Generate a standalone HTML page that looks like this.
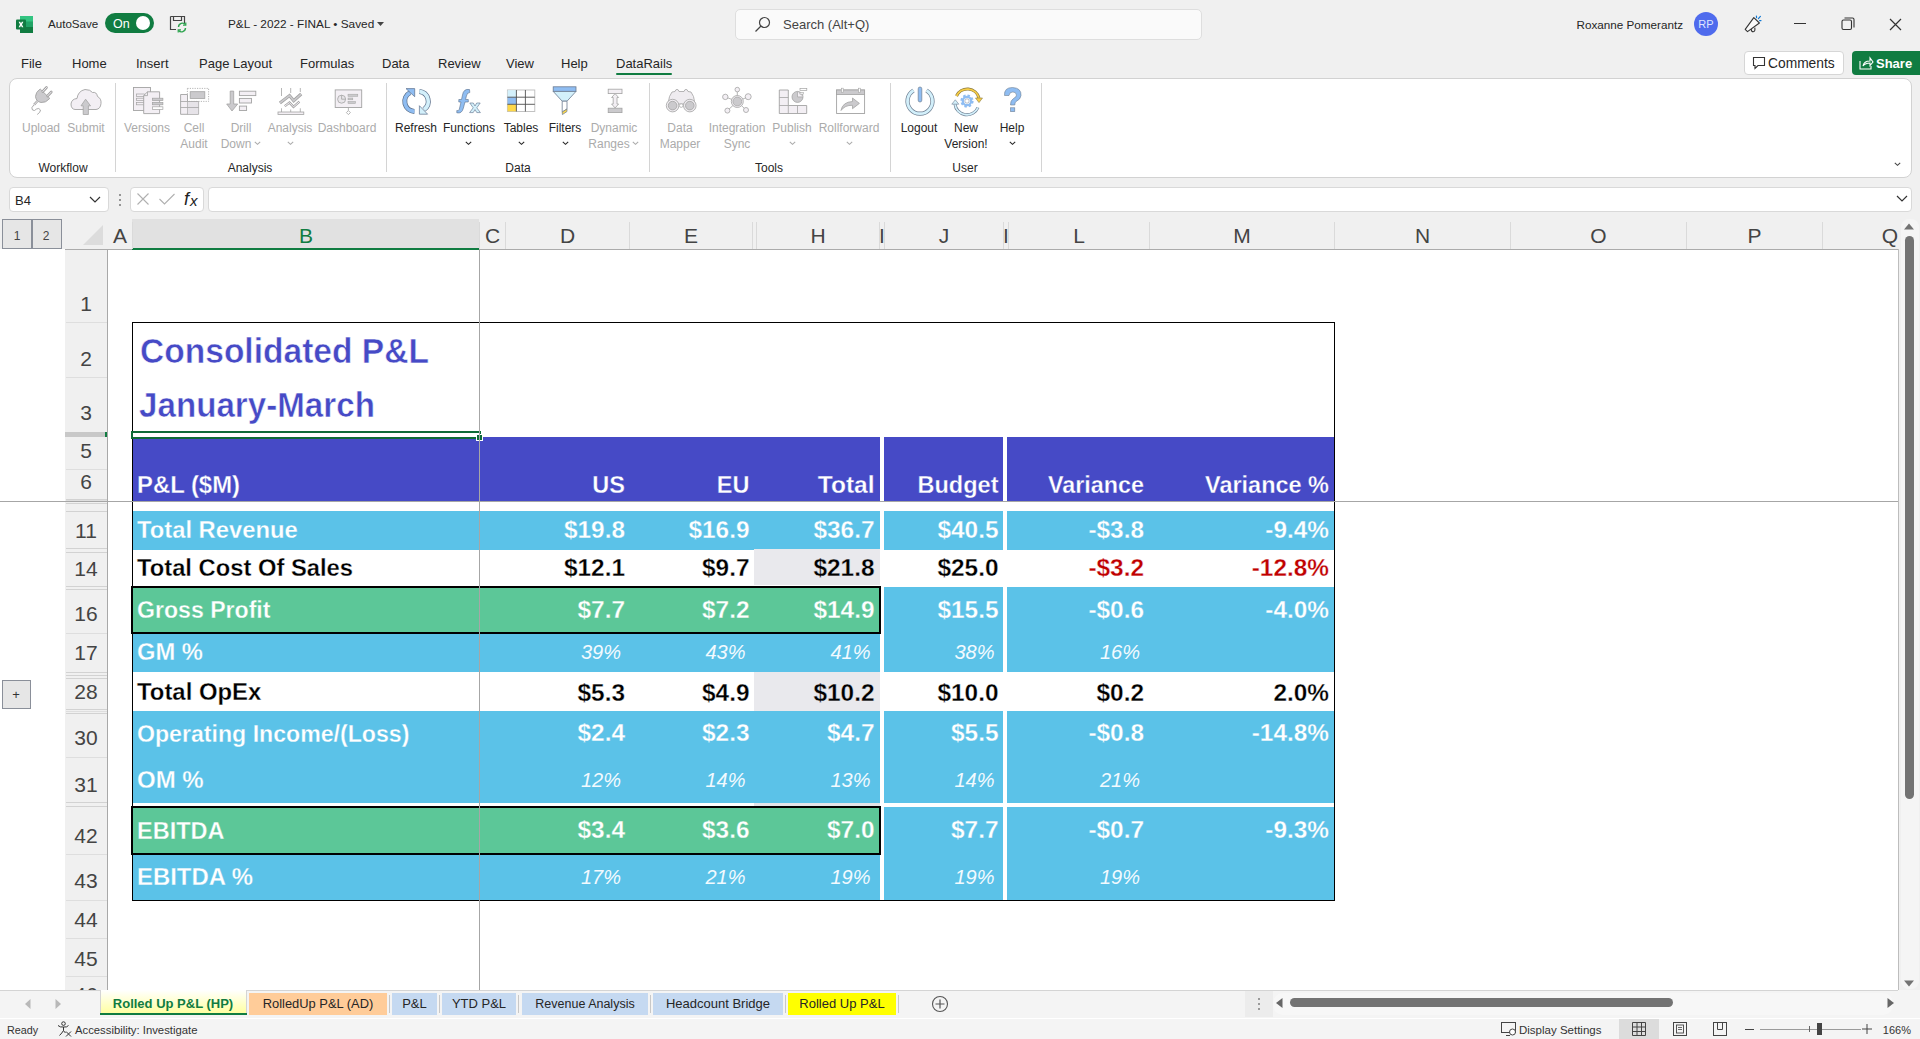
<!DOCTYPE html>
<html><head><meta charset="utf-8"><title>P&amp;L - 2022 - FINAL</title>
<style>
html,body{margin:0;padding:0;}
body{width:1920px;height:1039px;overflow:hidden;position:relative;background:#f0f0f0;font-family:"Liberation Sans", sans-serif;}
.t{position:absolute;white-space:nowrap;line-height:1;}
.r{position:absolute;box-sizing:border-box;}
svg.r{overflow:visible;}
</style></head><body>
<svg class="r" style="left:16px;top:16px;" width="17" height="17" viewBox="0 0 17 17"><rect x="4" y="0" width="13" height="17" rx="1" fill="#185c37"/><rect x="4" y="0" width="13" height="6" fill="#33c481"/><rect x="4" y="5.5" width="13" height="6" fill="#21a366"/><rect x="4" y="11" width="13" height="6" fill="#107c41"/><rect x="0" y="3.5" width="10" height="10" rx="1" fill="#107c41"/><path d="M2.6 5.8 L4.2 5.8 L5 7.6 L5.8 5.8 L7.4 5.8 L6 8.5 L7.4 11.2 L5.8 11.2 L5 9.4 L4.2 11.2 L2.6 11.2 L4 8.5Z" fill="#fff"/></svg><div class="t" style="top:18.00px;font-size:11.6px;color:#262626;font-weight:normal;font-style:normal;left:48px;">AutoSave</div><div class="r" style="left:105px;top:13px;width:49px;height:20px;background:#107c41;border-radius:10px;"></div><div class="t" style="top:18.00px;font-size:12.5px;color:#fff;font-weight:normal;font-style:normal;left:113px;">On</div><svg class="r" style="left:135px;top:15px;" width="16" height="16" viewBox="0 0 16 16"><circle cx="8" cy="8" r="7" fill="#fff"/></svg><svg class="r" style="left:169px;top:15px;" width="18" height="18" viewBox="0 0 18 18"><path d="M1.5 1.5 H15.5 V9 M1.5 1.5 V14.5 H7" fill="none" stroke="#444" stroke-width="1.2"/><path d="M4.5 1.5 V5.5 H12.5 V1.5" fill="none" stroke="#444" stroke-width="1.2"/><path d="M9.5 12 a4 4 0 0 1 7 -2.5 M16.5 13 a4 4 0 0 1 -7 2.5" fill="none" stroke="#2ea44f" stroke-width="1.4"/><path d="M16.8 7.5 V10.2 H14" fill="none" stroke="#2ea44f" stroke-width="1.2"/><path d="M9.2 17.5 V14.8 H12" fill="none" stroke="#2ea44f" stroke-width="1.2"/></svg><div class="t" style="top:19.00px;font-size:11.8px;color:#262626;font-weight:normal;font-style:normal;left:228px;">P&amp;L - 2022 - FINAL • Saved</div><svg class="r" style="left:377px;top:22px;" width="8" height="5" viewBox="0 0 8 5"><path d="M0 0 H7 L3.5 4Z" fill="#444"/></svg><div class="r" style="left:735px;top:9px;width:467px;height:31px;background:#fafafa;border:1px solid #dedede;border-radius:5px;"></div><svg class="r" style="left:754px;top:16px;" width="17" height="17" viewBox="0 0 17 17"><circle cx="10.5" cy="6.5" r="5" fill="none" stroke="#444" stroke-width="1.2"/><path d="M7 10 L1.5 15.5" stroke="#444" stroke-width="1.3"/></svg><div class="t" style="top:18.00px;font-size:13px;color:#444;font-weight:normal;font-style:normal;left:783px;">Search (Alt+Q)</div><div class="t" style="top:19.00px;font-size:11.7px;color:#262626;font-weight:normal;font-style:normal;left:483px;width:1200px;text-align:right;">Roxanne Pomerantz</div><svg class="r" style="left:1694px;top:12px;" width="24" height="24" viewBox="0 0 24 24"><circle cx="12" cy="12" r="12" fill="#4f6bed"/></svg><div class="t" style="top:19.00px;font-size:11px;color:#dfe6ff;font-weight:normal;font-style:normal;left:1106px;width:1200px;text-align:center;">RP</div><svg class="r" style="left:1740px;top:12px;" width="26" height="24" viewBox="0 0 26 24"><path d="M5.2 17.4 L7.5 19.6 L19.4 11 L13.8 5.7 Z" fill="#fafafa" stroke="#333" stroke-width="1.1" stroke-linejoin="round"/><path d="M11.3 17 Q11.2 19.8 13.3 19.8 Q15.4 19.6 14.8 15.6" fill="none" stroke="#333" stroke-width="1.1"/><path d="M16.4 4.2 L16.6 5.6 M18.4 6.6 L20.4 4.4 M19.6 8.6 L21 8.6" stroke="#0f78d4" stroke-width="1.2" stroke-linecap="round"/></svg><div class="r" style="left:1794px;top:23px;width:12px;height:1px;background:#333;"></div><svg class="r" style="left:1841px;top:17px;" width="14" height="14" viewBox="0 0 14 14"><rect x="1" y="3" width="9.5" height="9.5" rx="1.5" fill="none" stroke="#333" stroke-width="1.1"/><path d="M3.5 1 H11.5 a1.5 1.5 0 0 1 1.5 1.5 V10.5" fill="none" stroke="#333" stroke-width="1.1"/></svg><svg class="r" style="left:1889px;top:18px;" width="13" height="13" viewBox="0 0 13 13"><path d="M1 1 L12 12 M12 1 L1 12" stroke="#333" stroke-width="1.2"/></svg><div class="t" style="top:57.00px;font-size:13px;color:#262626;font-weight:normal;font-style:normal;left:21px;">File</div><div class="t" style="top:57.00px;font-size:13px;color:#262626;font-weight:normal;font-style:normal;left:72px;">Home</div><div class="t" style="top:57.00px;font-size:13px;color:#262626;font-weight:normal;font-style:normal;left:136px;">Insert</div><div class="t" style="top:57.00px;font-size:13px;color:#262626;font-weight:normal;font-style:normal;left:199px;">Page Layout</div><div class="t" style="top:57.00px;font-size:13px;color:#262626;font-weight:normal;font-style:normal;left:300px;">Formulas</div><div class="t" style="top:57.00px;font-size:13px;color:#262626;font-weight:normal;font-style:normal;left:382px;">Data</div><div class="t" style="top:57.00px;font-size:13px;color:#262626;font-weight:normal;font-style:normal;left:438px;">Review</div><div class="t" style="top:57.00px;font-size:13px;color:#262626;font-weight:normal;font-style:normal;left:506px;">View</div><div class="t" style="top:57.00px;font-size:13px;color:#262626;font-weight:normal;font-style:normal;left:561px;">Help</div><div class="t" style="top:57.00px;font-size:13px;color:#262626;font-weight:normal;font-style:normal;left:616px;">DataRails</div><div class="r" style="left:616px;top:73px;width:56px;height:2px;background:#107c41;border-radius:1px;"></div><div class="r" style="left:1744px;top:51px;width:100px;height:24px;background:#fff;border:1px solid #d6d6d6;border-radius:4px;"></div><svg class="r" style="left:1752px;top:56px;" width="14" height="14" viewBox="0 0 14 14"><path d="M1.5 1.5 H12.5 V9.5 H6 L3 12.5 V9.5 H1.5 Z" fill="none" stroke="#333" stroke-width="1.1"/></svg><div class="t" style="top:57.00px;font-size:13.8px;color:#262626;font-weight:normal;font-style:normal;left:1768px;">Comments</div><div class="r" style="left:1852px;top:51px;width:68px;height:24px;background:#107c41;border-radius:4px 0 0 4px;"></div><svg class="r" style="left:1859px;top:56px;" width="14" height="14" viewBox="0 0 14 14"><path d="M1 5 V13 H12 V10" fill="none" stroke="#fff" stroke-width="1.1"/><path d="M4 10 Q5 5 11 5 V2 L14 6 L11 9.5 V7 Q6.5 7 4 10Z" fill="none" stroke="#fff" stroke-width="1.1"/></svg><div class="t" style="top:57.00px;font-size:13px;color:#fff;font-weight:bold;font-style:normal;left:1876px;">Share</div><div class="r" style="left:9px;top:78px;width:1903px;height:100px;background:#fff;border:1px solid #d2d2d2;border-radius:8px;"></div><div class="r" style="left:115px;top:83px;width:1px;height:89px;background:#d4d4d4;"></div><div class="r" style="left:386px;top:83px;width:1px;height:89px;background:#d4d4d4;"></div><div class="r" style="left:649px;top:83px;width:1px;height:89px;background:#d4d4d4;"></div><div class="r" style="left:890px;top:83px;width:1px;height:89px;background:#d4d4d4;"></div><div class="r" style="left:1041px;top:83px;width:1px;height:89px;background:#d4d4d4;"></div><div class="t" style="top:162.00px;font-size:12px;color:#262626;font-weight:normal;font-style:normal;left:-537px;width:1200px;text-align:center;">Workflow</div><div class="t" style="top:162.00px;font-size:12px;color:#262626;font-weight:normal;font-style:normal;left:-350px;width:1200px;text-align:center;">Analysis</div><div class="t" style="top:162.00px;font-size:12px;color:#262626;font-weight:normal;font-style:normal;left:-82px;width:1200px;text-align:center;">Data</div><div class="t" style="top:162.00px;font-size:12px;color:#262626;font-weight:normal;font-style:normal;left:169px;width:1200px;text-align:center;">Tools</div><div class="t" style="top:162.00px;font-size:12px;color:#262626;font-weight:normal;font-style:normal;left:365px;width:1200px;text-align:center;">User</div><div class="t" style="top:122.00px;font-size:12px;color:#ababab;font-weight:normal;font-style:normal;left:-559px;width:1200px;text-align:center;">Upload</div><div class="t" style="top:122.00px;font-size:12px;color:#ababab;font-weight:normal;font-style:normal;left:-514px;width:1200px;text-align:center;">Submit</div><div class="t" style="top:122.00px;font-size:12px;color:#ababab;font-weight:normal;font-style:normal;left:-453px;width:1200px;text-align:center;">Versions</div><div class="t" style="top:122.00px;font-size:12px;color:#ababab;font-weight:normal;font-style:normal;left:-406px;width:1200px;text-align:center;">Cell</div><div class="t" style="top:138.00px;font-size:12px;color:#ababab;font-weight:normal;font-style:normal;left:-406px;width:1200px;text-align:center;">Audit</div><div class="t" style="top:122.00px;font-size:12px;color:#ababab;font-weight:normal;font-style:normal;left:-359px;width:1200px;text-align:center;">Drill</div><div class="t" style="top:138.00px;font-size:12px;color:#ababab;font-weight:normal;font-style:normal;left:-364px;width:1200px;text-align:center;">Down</div><div class="t" style="top:122.00px;font-size:12px;color:#ababab;font-weight:normal;font-style:normal;left:-310px;width:1200px;text-align:center;">Analysis</div><div class="t" style="top:122.00px;font-size:12px;color:#ababab;font-weight:normal;font-style:normal;left:-253px;width:1200px;text-align:center;">Dashboard</div><div class="t" style="top:122.00px;font-size:12px;color:#262626;font-weight:normal;font-style:normal;left:-184px;width:1200px;text-align:center;">Refresh</div><div class="t" style="top:122.00px;font-size:12px;color:#262626;font-weight:normal;font-style:normal;left:-131px;width:1200px;text-align:center;">Functions</div><div class="t" style="top:122.00px;font-size:12px;color:#262626;font-weight:normal;font-style:normal;left:-79px;width:1200px;text-align:center;">Tables</div><div class="t" style="top:122.00px;font-size:12px;color:#262626;font-weight:normal;font-style:normal;left:-35px;width:1200px;text-align:center;">Filters</div><div class="t" style="top:122.00px;font-size:12px;color:#ababab;font-weight:normal;font-style:normal;left:14px;width:1200px;text-align:center;">Dynamic</div><div class="t" style="top:138.00px;font-size:12px;color:#ababab;font-weight:normal;font-style:normal;left:9px;width:1200px;text-align:center;">Ranges</div><div class="t" style="top:122.00px;font-size:12px;color:#ababab;font-weight:normal;font-style:normal;left:80px;width:1200px;text-align:center;">Data</div><div class="t" style="top:138.00px;font-size:12px;color:#ababab;font-weight:normal;font-style:normal;left:80px;width:1200px;text-align:center;">Mapper</div><div class="t" style="top:122.00px;font-size:12px;color:#ababab;font-weight:normal;font-style:normal;left:137px;width:1200px;text-align:center;">Integration</div><div class="t" style="top:138.00px;font-size:12px;color:#ababab;font-weight:normal;font-style:normal;left:137px;width:1200px;text-align:center;">Sync</div><div class="t" style="top:122.00px;font-size:12px;color:#ababab;font-weight:normal;font-style:normal;left:192px;width:1200px;text-align:center;">Publish</div><div class="t" style="top:122.00px;font-size:12px;color:#ababab;font-weight:normal;font-style:normal;left:249px;width:1200px;text-align:center;">Rollforward</div><div class="t" style="top:122.00px;font-size:12px;color:#262626;font-weight:normal;font-style:normal;left:319px;width:1200px;text-align:center;">Logout</div><div class="t" style="top:122.00px;font-size:12px;color:#262626;font-weight:normal;font-style:normal;left:366px;width:1200px;text-align:center;">New</div><div class="t" style="top:138.00px;font-size:12px;color:#262626;font-weight:normal;font-style:normal;left:366px;width:1200px;text-align:center;">Version!</div><div class="t" style="top:122.00px;font-size:12px;color:#262626;font-weight:normal;font-style:normal;left:412px;width:1200px;text-align:center;">Help</div><svg class="r" style="left:253.5px;top:141px;" width="7" height="4" viewBox="0 0 7 4"><path d="M0.8 0.8 L3.5 3.3 L6.2 0.8" fill="none" stroke="#ababab" stroke-width="1.1"/></svg><svg class="r" style="left:286.5px;top:141px;" width="7" height="4" viewBox="0 0 7 4"><path d="M0.8 0.8 L3.5 3.3 L6.2 0.8" fill="none" stroke="#ababab" stroke-width="1.1"/></svg><svg class="r" style="left:464.5px;top:141px;" width="7" height="4" viewBox="0 0 7 4"><path d="M0.8 0.8 L3.5 3.3 L6.2 0.8" fill="none" stroke="#262626" stroke-width="1.1"/></svg><svg class="r" style="left:517.5px;top:141px;" width="7" height="4" viewBox="0 0 7 4"><path d="M0.8 0.8 L3.5 3.3 L6.2 0.8" fill="none" stroke="#262626" stroke-width="1.1"/></svg><svg class="r" style="left:561.5px;top:141px;" width="7" height="4" viewBox="0 0 7 4"><path d="M0.8 0.8 L3.5 3.3 L6.2 0.8" fill="none" stroke="#262626" stroke-width="1.1"/></svg><svg class="r" style="left:631.5px;top:141px;" width="7" height="4" viewBox="0 0 7 4"><path d="M0.8 0.8 L3.5 3.3 L6.2 0.8" fill="none" stroke="#ababab" stroke-width="1.1"/></svg><svg class="r" style="left:788.5px;top:141px;" width="7" height="4" viewBox="0 0 7 4"><path d="M0.8 0.8 L3.5 3.3 L6.2 0.8" fill="none" stroke="#ababab" stroke-width="1.1"/></svg><svg class="r" style="left:845.5px;top:141px;" width="7" height="4" viewBox="0 0 7 4"><path d="M0.8 0.8 L3.5 3.3 L6.2 0.8" fill="none" stroke="#ababab" stroke-width="1.1"/></svg><svg class="r" style="left:1008.5px;top:141px;" width="7" height="4" viewBox="0 0 7 4"><path d="M0.8 0.8 L3.5 3.3 L6.2 0.8" fill="none" stroke="#262626" stroke-width="1.1"/></svg><svg class="r" style="left:1893.5px;top:162px;" width="7" height="4" viewBox="0 0 7 4"><path d="M0.8 0.8 L3.5 3.3 L6.2 0.8" fill="none" stroke="#444" stroke-width="1.1"/></svg><div class="r" style="left:9px;top:187px;width:100px;height:25px;background:#fff;border:1px solid #d9d9d9;border-radius:4px;"></div><div class="t" style="top:194.00px;font-size:13px;color:#262626;font-weight:normal;font-style:normal;left:15px;">B4</div><svg class="r" style="left:89px;top:196px;" width="12" height="7" viewBox="0 0 12 7"><path d="M1 1 L6 6 L11 1" fill="none" stroke="#333" stroke-width="1.2"/></svg><div class="r" style="left:119px;top:194px;width:2px;height:2px;background:#777;border-radius:1px;"></div><div class="r" style="left:119px;top:199px;width:2px;height:2px;background:#777;border-radius:1px;"></div><div class="r" style="left:119px;top:204px;width:2px;height:2px;background:#777;border-radius:1px;"></div><div class="r" style="left:130px;top:187px;width:74px;height:25px;background:#fff;border:1px solid #d9d9d9;border-radius:4px;"></div><svg class="r" style="left:137px;top:193px;" width="12" height="12" viewBox="0 0 12 12"><path d="M0.5 0.5 L11.5 11.5 M11.5 0.5 L0.5 11.5" stroke="#b0b0b0" stroke-width="1.1"/></svg><svg class="r" style="left:159px;top:193px;" width="16" height="12" viewBox="0 0 16 12"><path d="M0.5 6 L5.5 11 L15.5 1" fill="none" stroke="#b0b0b0" stroke-width="1.1"/></svg><div class="t" style="top:190.00px;font-size:18px;color:#222;font-weight:normal;font-style:italic;left:184px;font-family:"Liberation Serif",serif;">f</div><div class="t" style="top:193.00px;font-size:15px;color:#222;font-weight:normal;font-style:italic;left:190px;font-family:"Liberation Serif",serif;">x</div><div class="r" style="left:208px;top:187px;width:1704px;height:25px;background:#fff;border:1px solid #d9d9d9;border-radius:4px;"></div><svg class="r" style="left:1896px;top:195px;" width="12" height="7" viewBox="0 0 12 7"><path d="M1 1 L6 6 L11 1" fill="none" stroke="#333" stroke-width="1.2"/></svg><div class="r" style="left:2px;top:219px;width:30px;height:30px;background:#e6e6e6;border:1px solid #8a8f99;"></div><div class="r" style="left:32px;top:219px;width:30px;height:30px;background:#e6e6e6;border:1px solid #8a8f99;"></div><div class="t" style="top:230.00px;font-size:12px;color:#444;font-weight:normal;font-style:normal;left:-583px;width:1200px;text-align:center;">1</div><div class="t" style="top:230.00px;font-size:12px;color:#444;font-weight:normal;font-style:normal;left:-554px;width:1200px;text-align:center;">2</div><div class="r" style="left:0px;top:249px;width:65px;height:741px;background:#fff;"></div><div class="r" style="left:2px;top:680px;width:29px;height:29px;background:#e6e6e6;border:1px solid #8a8f99;"></div><div class="t" style="top:688.00px;font-size:13px;color:#333;font-weight:normal;font-style:normal;left:-584px;width:1200px;text-align:center;">+</div><svg class="r" style="left:82px;top:224px;" width="22" height="22" viewBox="0 0 22 22"><path d="M21 1 V21 H1 Z" fill="#dcdcdc"/></svg><div class="r" style="left:107px;top:219px;width:1791px;height:30px;background:#f0f0f0;"></div><div class="r" style="left:65px;top:249px;width:42px;height:741px;background:#f0f0f0;"></div><div class="r" style="left:107px;top:249px;width:1px;height:741px;background:#a8a8a8;"></div><div class="r" style="left:65px;top:249px;width:1842px;height:1px;background:#ababab;"></div><div class="r" style="left:132px;top:219px;width:347px;height:30px;background:#e1e1e1;"></div><div class="r" style="left:132px;top:248px;width:347px;height:2px;background:#107c41;"></div><div class="r" style="left:132px;top:222px;width:1px;height:27px;background:#dadada;"></div><div class="r" style="left:479px;top:222px;width:1px;height:27px;background:#dadada;"></div><div class="r" style="left:505px;top:222px;width:1px;height:27px;background:#dadada;"></div><div class="r" style="left:629px;top:222px;width:1px;height:27px;background:#dadada;"></div><div class="r" style="left:752px;top:222px;width:1px;height:27px;background:#dadada;"></div><div class="r" style="left:756px;top:222px;width:1px;height:27px;background:#dadada;"></div><div class="r" style="left:879px;top:222px;width:1px;height:27px;background:#dadada;"></div><div class="r" style="left:884px;top:222px;width:1px;height:27px;background:#dadada;"></div><div class="r" style="left:1003px;top:222px;width:1px;height:27px;background:#dadada;"></div><div class="r" style="left:1008px;top:222px;width:1px;height:27px;background:#dadada;"></div><div class="r" style="left:1149px;top:222px;width:1px;height:27px;background:#dadada;"></div><div class="r" style="left:1334px;top:222px;width:1px;height:27px;background:#dadada;"></div><div class="r" style="left:1510px;top:222px;width:1px;height:27px;background:#dadada;"></div><div class="r" style="left:1686px;top:222px;width:1px;height:27px;background:#dadada;"></div><div class="r" style="left:1822px;top:222px;width:1px;height:27px;background:#dadada;"></div><div class="t" style="top:225.00px;font-size:21px;color:#444;font-weight:normal;font-style:normal;left:-480.0px;width:1200px;text-align:center;">A</div><div class="t" style="top:225.00px;font-size:21px;color:#107c41;font-weight:normal;font-style:normal;left:-294.0px;width:1200px;text-align:center;">B</div><div class="t" style="top:225.00px;font-size:21px;color:#444;font-weight:normal;font-style:normal;left:-107.5px;width:1200px;text-align:center;">C</div><div class="t" style="top:225.00px;font-size:21px;color:#444;font-weight:normal;font-style:normal;left:-32.5px;width:1200px;text-align:center;">D</div><div class="t" style="top:225.00px;font-size:21px;color:#444;font-weight:normal;font-style:normal;left:91.0px;width:1200px;text-align:center;">E</div><div class="t" style="top:225.00px;font-size:21px;color:#444;font-weight:normal;font-style:normal;left:218.0px;width:1200px;text-align:center;">H</div><div class="t" style="top:225.00px;font-size:21px;color:#444;font-weight:normal;font-style:normal;left:282.0px;width:1200px;text-align:center;">I</div><div class="t" style="top:225.00px;font-size:21px;color:#444;font-weight:normal;font-style:normal;left:344.0px;width:1200px;text-align:center;">J</div><div class="t" style="top:225.00px;font-size:21px;color:#444;font-weight:normal;font-style:normal;left:406.0px;width:1200px;text-align:center;">I</div><div class="t" style="top:225.00px;font-size:21px;color:#444;font-weight:normal;font-style:normal;left:479.0px;width:1200px;text-align:center;">L</div><div class="t" style="top:225.00px;font-size:21px;color:#444;font-weight:normal;font-style:normal;left:642.0px;width:1200px;text-align:center;">M</div><div class="t" style="top:225.00px;font-size:21px;color:#444;font-weight:normal;font-style:normal;left:822.5px;width:1200px;text-align:center;">N</div><div class="t" style="top:225.00px;font-size:21px;color:#444;font-weight:normal;font-style:normal;left:998.5px;width:1200px;text-align:center;">O</div><div class="t" style="top:225.00px;font-size:21px;color:#444;font-weight:normal;font-style:normal;left:1154.5px;width:1200px;text-align:center;">P</div><div class="t" style="top:225.00px;font-size:21px;color:#444;font-weight:normal;font-style:normal;left:698px;width:1200px;text-align:right;">Q</div><div class="r" style="left:108px;top:250px;width:1790px;height:740px;background:#fff;"></div><div class="r" style="left:66px;top:322px;width:41px;height:1px;background:#dedede;"></div><div class="t" style="top:293.00px;font-size:21px;color:#444;font-weight:normal;font-style:normal;left:-514px;width:1200px;text-align:center;">1</div><div class="r" style="left:66px;top:377px;width:41px;height:1px;background:#dedede;"></div><div class="t" style="top:348.00px;font-size:21px;color:#444;font-weight:normal;font-style:normal;left:-514px;width:1200px;text-align:center;">2</div><div class="r" style="left:66px;top:432px;width:41px;height:1px;background:#dedede;"></div><div class="t" style="top:402.00px;font-size:21px;color:#444;font-weight:normal;font-style:normal;left:-514px;width:1200px;text-align:center;">3</div><div class="r" style="left:65px;top:432px;width:42px;height:5px;background:#c8c8c8;"></div><div class="r" style="left:105px;top:432px;width:2px;height:5px;background:#107c41;"></div><div class="r" style="left:66px;top:469px;width:41px;height:1px;background:#dedede;"></div><div class="t" style="top:440.00px;font-size:21px;color:#444;font-weight:normal;font-style:normal;left:-514px;width:1200px;text-align:center;">5</div><div class="r" style="left:66px;top:500px;width:41px;height:1px;background:#dedede;"></div><div class="t" style="top:471.00px;font-size:21px;color:#444;font-weight:normal;font-style:normal;left:-514px;width:1200px;text-align:center;">6</div><div class="r" style="left:66px;top:548px;width:41px;height:1px;background:#dedede;"></div><div class="t" style="top:520.00px;font-size:21px;color:#444;font-weight:normal;font-style:normal;left:-514px;width:1200px;text-align:center;">11</div><div class="r" style="left:66px;top:586px;width:41px;height:1px;background:#dedede;"></div><div class="t" style="top:558.00px;font-size:21px;color:#444;font-weight:normal;font-style:normal;left:-514px;width:1200px;text-align:center;">14</div><div class="r" style="left:66px;top:633px;width:41px;height:1px;background:#dedede;"></div><div class="t" style="top:603.00px;font-size:21px;color:#444;font-weight:normal;font-style:normal;left:-514px;width:1200px;text-align:center;">16</div><div class="r" style="left:66px;top:672px;width:41px;height:1px;background:#dedede;"></div><div class="t" style="top:642.00px;font-size:21px;color:#444;font-weight:normal;font-style:normal;left:-514px;width:1200px;text-align:center;">17</div><div class="r" style="left:66px;top:711px;width:41px;height:1px;background:#dedede;"></div><div class="t" style="top:681.00px;font-size:21px;color:#444;font-weight:normal;font-style:normal;left:-514px;width:1200px;text-align:center;">28</div><div class="r" style="left:66px;top:757px;width:41px;height:1px;background:#dedede;"></div><div class="t" style="top:727.00px;font-size:21px;color:#444;font-weight:normal;font-style:normal;left:-514px;width:1200px;text-align:center;">30</div><div class="r" style="left:66px;top:802px;width:41px;height:1px;background:#dedede;"></div><div class="t" style="top:774.00px;font-size:21px;color:#444;font-weight:normal;font-style:normal;left:-514px;width:1200px;text-align:center;">31</div><div class="r" style="left:66px;top:854px;width:41px;height:1px;background:#dedede;"></div><div class="t" style="top:825.00px;font-size:21px;color:#444;font-weight:normal;font-style:normal;left:-514px;width:1200px;text-align:center;">42</div><div class="r" style="left:66px;top:900px;width:41px;height:1px;background:#dedede;"></div><div class="t" style="top:870.00px;font-size:21px;color:#444;font-weight:normal;font-style:normal;left:-514px;width:1200px;text-align:center;">43</div><div class="r" style="left:66px;top:938px;width:41px;height:1px;background:#dedede;"></div><div class="t" style="top:909.00px;font-size:21px;color:#444;font-weight:normal;font-style:normal;left:-514px;width:1200px;text-align:center;">44</div><div class="r" style="left:66px;top:976px;width:41px;height:1px;background:#dedede;"></div><div class="t" style="top:948.00px;font-size:21px;color:#444;font-weight:normal;font-style:normal;left:-514px;width:1200px;text-align:center;">45</div><div class="r" style="left:66px;top:1014px;width:41px;height:1px;background:#dedede;"></div><div class="r" style="left:65px;top:976px;width:42px;height:14px;overflow:hidden;"><div class="t" style="top:8.00px;font-size:21px;color:#444;font-weight:normal;font-style:normal;left:-579px;width:1200px;text-align:center;">46</div></div><div class="r" style="left:66px;top:499px;width:41px;height:1px;background:#d2d2d2;"></div><div class="r" style="left:66px;top:503px;width:41px;height:1px;background:#d2d2d2;"></div><div class="r" style="left:66px;top:511px;width:41px;height:1px;background:#d2d2d2;"></div><div class="r" style="left:66px;top:548px;width:41px;height:1px;background:#d2d2d2;"></div><div class="r" style="left:66px;top:552px;width:41px;height:1px;background:#d2d2d2;"></div><div class="r" style="left:66px;top:586px;width:41px;height:1px;background:#d2d2d2;"></div><div class="r" style="left:66px;top:589px;width:41px;height:1px;background:#d2d2d2;"></div><div class="r" style="left:66px;top:672px;width:41px;height:1px;background:#d2d2d2;"></div><div class="r" style="left:66px;top:675px;width:41px;height:1px;background:#d2d2d2;"></div><div class="r" style="left:66px;top:678px;width:41px;height:1px;background:#d2d2d2;"></div><div class="r" style="left:66px;top:709px;width:41px;height:1px;background:#d2d2d2;"></div><div class="r" style="left:66px;top:713px;width:41px;height:1px;background:#d2d2d2;"></div><div class="r" style="left:66px;top:802px;width:41px;height:1px;background:#d2d2d2;"></div><div class="r" style="left:66px;top:806px;width:41px;height:1px;background:#d2d2d2;"></div><div class="r" style="left:132px;top:437px;width:748px;height:64px;background:#464ac6;"></div><div class="r" style="left:884px;top:437px;width:119px;height:64px;background:#464ac6;"></div><div class="r" style="left:1007px;top:437px;width:327px;height:64px;background:#464ac6;"></div><div class="r" style="left:132px;top:511px;width:748px;height:39px;background:#5bc2e8;"></div><div class="r" style="left:884px;top:511px;width:119px;height:39px;background:#5bc2e8;"></div><div class="r" style="left:1007px;top:511px;width:327px;height:39px;background:#5bc2e8;"></div><div class="r" style="left:754px;top:549px;width:126px;height:36px;background:#e9e9ed;"></div><div class="r" style="left:132px;top:587px;width:748px;height:46px;background:#5cc798;"></div><div class="r" style="left:884px;top:587px;width:119px;height:46px;background:#5bc2e8;"></div><div class="r" style="left:1007px;top:587px;width:327px;height:46px;background:#5bc2e8;"></div><div class="r" style="left:132px;top:633px;width:748px;height:39px;background:#5bc2e8;"></div><div class="r" style="left:884px;top:633px;width:119px;height:39px;background:#5bc2e8;"></div><div class="r" style="left:1007px;top:633px;width:327px;height:39px;background:#5bc2e8;"></div><div class="r" style="left:754px;top:672px;width:126px;height:39px;background:#e9e9ed;"></div><div class="r" style="left:132px;top:711px;width:748px;height:92px;background:#5bc2e8;"></div><div class="r" style="left:884px;top:711px;width:119px;height:92px;background:#5bc2e8;"></div><div class="r" style="left:1007px;top:711px;width:327px;height:92px;background:#5bc2e8;"></div><div class="r" style="left:754px;top:803px;width:126px;height:3px;background:#e4e4e9;"></div><div class="r" style="left:132px;top:807px;width:748px;height:48px;background:#5cc798;"></div><div class="r" style="left:884px;top:807px;width:119px;height:48px;background:#5bc2e8;"></div><div class="r" style="left:1007px;top:807px;width:327px;height:48px;background:#5bc2e8;"></div><div class="r" style="left:132px;top:855px;width:748px;height:45px;background:#5bc2e8;"></div><div class="r" style="left:884px;top:855px;width:119px;height:45px;background:#5bc2e8;"></div><div class="r" style="left:1007px;top:855px;width:327px;height:45px;background:#5bc2e8;"></div><div class="r" style="left:132px;top:322px;width:1203px;height:579px;background:transparent;border:1px solid #000;"></div><div class="r" style="left:131px;top:586px;width:750px;height:48px;background:transparent;border:2px solid #000;"></div><div class="r" style="left:131px;top:806px;width:750px;height:49px;background:transparent;border:2px solid #000;"></div><div class="r" style="left:131px;top:431px;width:350px;height:8px;background:transparent;border:2px solid #0e6b38;"></div><div class="r" style="left:476px;top:434px;width:7px;height:7px;background:#0e6b38;border:1px solid #fff;"></div><div class="r" style="left:479px;top:250px;width:1px;height:740px;background:#a6a6a6;"></div><div class="r" style="left:0px;top:501px;width:1898px;height:1px;background:#a6a6a6;"></div><div class="t" style="top:334.00px;font-size:35.6px;color:#464ac6;font-weight:bold;font-style:normal;-webkit-text-stroke:0.5px #fff;transform:scaleX(0.943);transform-origin:0 0;left:140px;">Consolidated P&amp;L</div><div class="t" style="top:388.00px;font-size:35.6px;color:#464ac6;font-weight:bold;font-style:normal;-webkit-text-stroke:0.5px #fff;transform:scaleX(0.932);transform-origin:0 0;left:139px;">January-March</div><div class="t" style="top:473.00px;font-size:23.87px;color:#fff;font-weight:bold;font-style:normal;-webkit-text-stroke:0.3px #464ac6;left:137px;">P&amp;L ($M)</div><div class="t" style="top:474.00px;font-size:23.5px;color:#fff;font-weight:bold;font-style:normal;-webkit-text-stroke:0.3px #464ac6;left:-575px;width:1200px;text-align:right;">US</div><div class="t" style="top:474.00px;font-size:23.5px;color:#fff;font-weight:bold;font-style:normal;-webkit-text-stroke:0.3px #464ac6;left:-450.5px;width:1200px;text-align:right;">EU</div><div class="t" style="top:473.00px;font-size:24.5px;color:#fff;font-weight:bold;font-style:normal;-webkit-text-stroke:0.3px #464ac6;left:-325.5px;width:1200px;text-align:right;">Total</div><div class="t" style="top:474.00px;font-size:23.52px;color:#fff;font-weight:bold;font-style:normal;-webkit-text-stroke:0.3px #464ac6;left:-201.5px;width:1200px;text-align:right;">Budget</div><div class="t" style="top:474.00px;font-size:23.34px;color:#fff;font-weight:bold;font-style:normal;-webkit-text-stroke:0.3px #464ac6;left:-56px;width:1200px;text-align:right;">Variance</div><div class="t" style="top:474.00px;font-size:23.48px;color:#fff;font-weight:bold;font-style:normal;-webkit-text-stroke:0.3px #464ac6;left:129px;width:1200px;text-align:right;">Variance %</div><div class="t" style="top:518.00px;font-size:23.77px;color:#fff;font-weight:bold;font-style:normal;-webkit-text-stroke:0.3px #5bc2e8;left:137px;">Total Revenue</div><div class="t" style="top:518.00px;font-size:24.4px;color:#fff;font-weight:bold;font-style:normal;-webkit-text-stroke:0.3px #5bc2e8;left:-575px;width:1200px;text-align:right;">$19.8</div><div class="t" style="top:518.00px;font-size:24.4px;color:#fff;font-weight:bold;font-style:normal;-webkit-text-stroke:0.3px #5bc2e8;left:-450.5px;width:1200px;text-align:right;">$16.9</div><div class="t" style="top:518.00px;font-size:24.4px;color:#fff;font-weight:bold;font-style:normal;-webkit-text-stroke:0.3px #5bc2e8;left:-325.5px;width:1200px;text-align:right;">$36.7</div><div class="t" style="top:518.00px;font-size:24.4px;color:#fff;font-weight:bold;font-style:normal;-webkit-text-stroke:0.3px #5bc2e8;left:-201.5px;width:1200px;text-align:right;">$40.5</div><div class="t" style="top:518.00px;font-size:24.4px;color:#fff;font-weight:bold;font-style:normal;-webkit-text-stroke:0.3px #5bc2e8;left:-56px;width:1200px;text-align:right;">-$3.8</div><div class="t" style="top:518.00px;font-size:24.4px;color:#fff;font-weight:bold;font-style:normal;-webkit-text-stroke:0.3px #5bc2e8;left:129px;width:1200px;text-align:right;">-9.4%</div><div class="t" style="top:556.00px;font-size:23.75px;color:#000;font-weight:bold;font-style:normal;-webkit-text-stroke:0.3px #fff;left:137px;">Total Cost Of Sales</div><div class="t" style="top:556.00px;font-size:24.4px;color:#000;font-weight:bold;font-style:normal;-webkit-text-stroke:0.3px #fff;left:-575px;width:1200px;text-align:right;">$12.1</div><div class="t" style="top:556.00px;font-size:24.4px;color:#000;font-weight:bold;font-style:normal;-webkit-text-stroke:0.3px #fff;left:-450.5px;width:1200px;text-align:right;">$9.7</div><div class="t" style="top:556.00px;font-size:24.4px;color:#000;font-weight:bold;font-style:normal;-webkit-text-stroke:0.3px #e9e9ed;left:-325.5px;width:1200px;text-align:right;">$21.8</div><div class="t" style="top:556.00px;font-size:24.4px;color:#000;font-weight:bold;font-style:normal;-webkit-text-stroke:0.3px #fff;left:-201.5px;width:1200px;text-align:right;">$25.0</div><div class="t" style="top:556.00px;font-size:24.4px;color:#c00000;font-weight:bold;font-style:normal;-webkit-text-stroke:0.3px #fff;left:-56px;width:1200px;text-align:right;">-$3.2</div><div class="t" style="top:556.00px;font-size:24.4px;color:#c00000;font-weight:bold;font-style:normal;-webkit-text-stroke:0.3px #fff;left:129px;width:1200px;text-align:right;">-12.8%</div><div class="t" style="top:599.00px;font-size:23.1px;color:#fff;font-weight:bold;font-style:normal;-webkit-text-stroke:0.3px #5cc798;left:137px;">Gross Profit</div><div class="t" style="top:598.00px;font-size:24.4px;color:#fff;font-weight:bold;font-style:normal;-webkit-text-stroke:0.3px #5cc798;left:-575px;width:1200px;text-align:right;">$7.7</div><div class="t" style="top:598.00px;font-size:24.4px;color:#fff;font-weight:bold;font-style:normal;-webkit-text-stroke:0.3px #5cc798;left:-450.5px;width:1200px;text-align:right;">$7.2</div><div class="t" style="top:598.00px;font-size:24.4px;color:#fff;font-weight:bold;font-style:normal;-webkit-text-stroke:0.3px #5cc798;left:-325.5px;width:1200px;text-align:right;">$14.9</div><div class="t" style="top:598.00px;font-size:24.4px;color:#fff;font-weight:bold;font-style:normal;-webkit-text-stroke:0.3px #5bc2e8;left:-201.5px;width:1200px;text-align:right;">$15.5</div><div class="t" style="top:598.00px;font-size:24.4px;color:#fff;font-weight:bold;font-style:normal;-webkit-text-stroke:0.3px #5bc2e8;left:-56px;width:1200px;text-align:right;">-$0.6</div><div class="t" style="top:598.00px;font-size:24.4px;color:#fff;font-weight:bold;font-style:normal;-webkit-text-stroke:0.3px #5bc2e8;left:129px;width:1200px;text-align:right;">-4.0%</div><div class="t" style="top:640.00px;font-size:23.75px;color:#fff;font-weight:bold;font-style:normal;-webkit-text-stroke:0.3px #5bc2e8;left:137px;">GM %</div><div class="t" style="top:642.00px;font-size:20px;color:#f2faff;font-weight:normal;font-style:italic;left:-579px;width:1200px;text-align:right;">39%</div><div class="t" style="top:642.00px;font-size:20px;color:#f2faff;font-weight:normal;font-style:italic;left:-454.5px;width:1200px;text-align:right;">43%</div><div class="t" style="top:642.00px;font-size:20px;color:#f2faff;font-weight:normal;font-style:italic;left:-329.5px;width:1200px;text-align:right;">41%</div><div class="t" style="top:642.00px;font-size:20px;color:#f2faff;font-weight:normal;font-style:italic;left:-205.5px;width:1200px;text-align:right;">38%</div><div class="t" style="top:642.00px;font-size:20px;color:#f2faff;font-weight:normal;font-style:italic;left:-60px;width:1200px;text-align:right;">16%</div><div class="t" style="top:680.00px;font-size:23.9px;color:#000;font-weight:bold;font-style:normal;-webkit-text-stroke:0.3px #fff;left:137px;">Total OpEx</div><div class="t" style="top:681.00px;font-size:24.4px;color:#000;font-weight:bold;font-style:normal;-webkit-text-stroke:0.3px #fff;left:-575px;width:1200px;text-align:right;">$5.3</div><div class="t" style="top:681.00px;font-size:24.4px;color:#000;font-weight:bold;font-style:normal;-webkit-text-stroke:0.3px #fff;left:-450.5px;width:1200px;text-align:right;">$4.9</div><div class="t" style="top:681.00px;font-size:24.4px;color:#000;font-weight:bold;font-style:normal;-webkit-text-stroke:0.3px #e9e9ed;left:-325.5px;width:1200px;text-align:right;">$10.2</div><div class="t" style="top:681.00px;font-size:24.4px;color:#000;font-weight:bold;font-style:normal;-webkit-text-stroke:0.3px #fff;left:-201.5px;width:1200px;text-align:right;">$10.0</div><div class="t" style="top:681.00px;font-size:24.4px;color:#000;font-weight:bold;font-style:normal;-webkit-text-stroke:0.3px #fff;left:-56px;width:1200px;text-align:right;">$0.2</div><div class="t" style="top:681.00px;font-size:24.4px;color:#000;font-weight:bold;font-style:normal;-webkit-text-stroke:0.3px #fff;left:129px;width:1200px;text-align:right;">2.0%</div><div class="t" style="top:723.00px;font-size:23.13px;color:#fff;font-weight:bold;font-style:normal;-webkit-text-stroke:0.3px #5bc2e8;left:137px;">Operating Income/(Loss)</div><div class="t" style="top:721.00px;font-size:24.4px;color:#fff;font-weight:bold;font-style:normal;-webkit-text-stroke:0.3px #5bc2e8;left:-575px;width:1200px;text-align:right;">$2.4</div><div class="t" style="top:721.00px;font-size:24.4px;color:#fff;font-weight:bold;font-style:normal;-webkit-text-stroke:0.3px #5bc2e8;left:-450.5px;width:1200px;text-align:right;">$2.3</div><div class="t" style="top:721.00px;font-size:24.4px;color:#fff;font-weight:bold;font-style:normal;-webkit-text-stroke:0.3px #5bc2e8;left:-325.5px;width:1200px;text-align:right;">$4.7</div><div class="t" style="top:721.00px;font-size:24.4px;color:#fff;font-weight:bold;font-style:normal;-webkit-text-stroke:0.3px #5bc2e8;left:-201.5px;width:1200px;text-align:right;">$5.5</div><div class="t" style="top:721.00px;font-size:24.4px;color:#fff;font-weight:bold;font-style:normal;-webkit-text-stroke:0.3px #5bc2e8;left:-56px;width:1200px;text-align:right;">-$0.8</div><div class="t" style="top:721.00px;font-size:24.4px;color:#fff;font-weight:bold;font-style:normal;-webkit-text-stroke:0.3px #5bc2e8;left:129px;width:1200px;text-align:right;">-14.8%</div><div class="t" style="top:768.00px;font-size:24.0px;color:#fff;font-weight:bold;font-style:normal;-webkit-text-stroke:0.3px #5bc2e8;left:137px;">OM %</div><div class="t" style="top:770.00px;font-size:20px;color:#f2faff;font-weight:normal;font-style:italic;left:-579px;width:1200px;text-align:right;">12%</div><div class="t" style="top:770.00px;font-size:20px;color:#f2faff;font-weight:normal;font-style:italic;left:-454.5px;width:1200px;text-align:right;">14%</div><div class="t" style="top:770.00px;font-size:20px;color:#f2faff;font-weight:normal;font-style:italic;left:-329.5px;width:1200px;text-align:right;">13%</div><div class="t" style="top:770.00px;font-size:20px;color:#f2faff;font-weight:normal;font-style:italic;left:-205.5px;width:1200px;text-align:right;">14%</div><div class="t" style="top:770.00px;font-size:20px;color:#f2faff;font-weight:normal;font-style:italic;left:-60px;width:1200px;text-align:right;">21%</div><div class="t" style="top:820.00px;font-size:23.51px;color:#fff;font-weight:bold;font-style:normal;-webkit-text-stroke:0.3px #5cc798;left:137px;">EBITDA</div><div class="t" style="top:818.00px;font-size:24.4px;color:#fff;font-weight:bold;font-style:normal;-webkit-text-stroke:0.3px #5cc798;left:-575px;width:1200px;text-align:right;">$3.4</div><div class="t" style="top:818.00px;font-size:24.4px;color:#fff;font-weight:bold;font-style:normal;-webkit-text-stroke:0.3px #5cc798;left:-450.5px;width:1200px;text-align:right;">$3.6</div><div class="t" style="top:818.00px;font-size:24.4px;color:#fff;font-weight:bold;font-style:normal;-webkit-text-stroke:0.3px #5cc798;left:-325.5px;width:1200px;text-align:right;">$7.0</div><div class="t" style="top:818.00px;font-size:24.4px;color:#fff;font-weight:bold;font-style:normal;-webkit-text-stroke:0.3px #5bc2e8;left:-201.5px;width:1200px;text-align:right;">$7.7</div><div class="t" style="top:818.00px;font-size:24.4px;color:#fff;font-weight:bold;font-style:normal;-webkit-text-stroke:0.3px #5bc2e8;left:-56px;width:1200px;text-align:right;">-$0.7</div><div class="t" style="top:818.00px;font-size:24.4px;color:#fff;font-weight:bold;font-style:normal;-webkit-text-stroke:0.3px #5bc2e8;left:129px;width:1200px;text-align:right;">-9.3%</div><div class="t" style="top:865.00px;font-size:23.91px;color:#fff;font-weight:bold;font-style:normal;-webkit-text-stroke:0.3px #5bc2e8;left:137px;">EBITDA %</div><div class="t" style="top:867.00px;font-size:20px;color:#f2faff;font-weight:normal;font-style:italic;left:-579px;width:1200px;text-align:right;">17%</div><div class="t" style="top:867.00px;font-size:20px;color:#f2faff;font-weight:normal;font-style:italic;left:-454.5px;width:1200px;text-align:right;">21%</div><div class="t" style="top:867.00px;font-size:20px;color:#f2faff;font-weight:normal;font-style:italic;left:-329.5px;width:1200px;text-align:right;">19%</div><div class="t" style="top:867.00px;font-size:20px;color:#f2faff;font-weight:normal;font-style:italic;left:-205.5px;width:1200px;text-align:right;">19%</div><div class="t" style="top:867.00px;font-size:20px;color:#f2faff;font-weight:normal;font-style:italic;left:-60px;width:1200px;text-align:right;">19%</div><div class="r" style="left:1898px;top:219px;width:22px;height:771px;background:#f0f0f0;"></div><div class="r" style="left:1901px;top:219px;width:18px;height:770px;background:#f5f5f5;border-radius:8px;"></div><div class="r" style="left:1898px;top:249px;width:1px;height:741px;background:#bdbdbd;"></div><svg class="r" style="left:1904px;top:223px;" width="10" height="7" viewBox="0 0 10 7"><path d="M0 6.5 L5 0.5 L10 6.5Z" fill="#737373"/></svg><div class="r" style="left:1905px;top:236px;width:9px;height:563px;background:#737373;border-radius:5px;"></div><svg class="r" style="left:1904px;top:980px;" width="10" height="7" viewBox="0 0 10 7"><path d="M0 0.5 L5 6.5 L10 0.5Z" fill="#737373"/></svg><div class="r" style="left:0px;top:990px;width:1920px;height:28px;background:#f4f4f4;"></div><div class="r" style="left:1245px;top:991px;width:28px;height:26px;background:#ececec;"></div><div class="r" style="left:1273px;top:993px;width:620px;height:22px;background:#f7f7f7;border-radius:10px;"></div><div class="r" style="left:0px;top:990px;width:100px;height:1px;background:#d4d4d4;"></div><div class="r" style="left:246px;top:990px;width:1674px;height:1px;background:#d4d4d4;"></div><div class="r" style="left:1898px;top:990px;width:22px;height:1px;background:#f4f4f4;"></div><svg class="r" style="left:25px;top:999px;" width="6" height="10" viewBox="0 0 6 10"><path d="M5.5 0 V10 L0 5Z" fill="#b8b8b8"/></svg><svg class="r" style="left:55px;top:999px;" width="6" height="10" viewBox="0 0 6 10"><path d="M0.5 0 V10 L6 5Z" fill="#b8b8b8"/></svg><div class="r" style="left:100px;top:990px;width:147px;height:25px;background:linear-gradient(#ffffff,#ffff99);border-left:1px solid #d4d4d4;border-right:1px solid #d4d4d4;"></div><div class="r" style="left:100px;top:1013px;width:147px;height:2px;background:#107c41;"></div><div class="t" style="top:997.00px;font-size:13px;color:#107c41;font-weight:bold;font-style:normal;left:-427px;width:1200px;text-align:center;">Rolled Up P&amp;L (HP)</div><div class="r" style="left:249px;top:993px;width:138px;height:22px;background:#ffcc99;"></div><div class="r" style="left:389px;top:995px;width:1px;height:18px;background:#c8c8c8;"></div><div class="t" style="top:998.00px;font-size:12.9px;color:#262626;font-weight:normal;font-style:normal;left:-282.0px;width:1200px;text-align:center;">RolledUp P&amp;L (AD)</div><div class="r" style="left:392px;top:993px;width:45px;height:22px;background:#c5d9f1;"></div><div class="r" style="left:439px;top:995px;width:1px;height:18px;background:#c8c8c8;"></div><div class="t" style="top:997.00px;font-size:13px;color:#262626;font-weight:normal;font-style:normal;left:-185.5px;width:1200px;text-align:center;">P&amp;L</div><div class="r" style="left:442px;top:993px;width:74px;height:22px;background:#c5d9f1;"></div><div class="r" style="left:518px;top:995px;width:1px;height:18px;background:#c8c8c8;"></div><div class="t" style="top:997.00px;font-size:13px;color:#262626;font-weight:normal;font-style:normal;left:-121.0px;width:1200px;text-align:center;">YTD P&amp;L</div><div class="r" style="left:522px;top:993px;width:126px;height:22px;background:#c5d9f1;"></div><div class="r" style="left:650px;top:995px;width:1px;height:18px;background:#c8c8c8;"></div><div class="t" style="top:998.00px;font-size:12.5px;color:#262626;font-weight:normal;font-style:normal;left:-15.0px;width:1200px;text-align:center;">Revenue Analysis</div><div class="r" style="left:653px;top:993px;width:130px;height:22px;background:#c5d9f1;"></div><div class="r" style="left:785px;top:995px;width:1px;height:18px;background:#c8c8c8;"></div><div class="t" style="top:997.00px;font-size:13px;color:#262626;font-weight:normal;font-style:normal;left:118.0px;width:1200px;text-align:center;">Headcount Bridge</div><div class="r" style="left:788px;top:993px;width:108px;height:22px;background:#ffff00;"></div><div class="r" style="left:898px;top:995px;width:1px;height:18px;background:#c8c8c8;"></div><div class="t" style="top:997.00px;font-size:13px;color:#262626;font-weight:normal;font-style:normal;left:242.0px;width:1200px;text-align:center;">Rolled Up P&amp;L</div><svg class="r" style="left:931px;top:995px;" width="18" height="18" viewBox="0 0 18 18"><circle cx="9" cy="9" r="7.5" fill="none" stroke="#555" stroke-width="1.1"/><path d="M9 4.5 V13.5 M4.5 9 H13.5" stroke="#555" stroke-width="1.2"/></svg><div class="r" style="left:1258px;top:998px;width:2px;height:2px;background:#9a9a9a;"></div><div class="r" style="left:1258px;top:1003px;width:2px;height:2px;background:#9a9a9a;"></div><div class="r" style="left:1258px;top:1008px;width:2px;height:2px;background:#9a9a9a;"></div><svg class="r" style="left:1276px;top:998px;" width="7" height="10" viewBox="0 0 7 10"><path d="M6.5 0 V10 L0 5Z" fill="#666"/></svg><div class="r" style="left:1290px;top:998px;width:383px;height:9px;background:#737373;border-radius:5px;"></div><svg class="r" style="left:1887px;top:998px;" width="7" height="10" viewBox="0 0 7 10"><path d="M0.5 0 V10 L7 5Z" fill="#666"/></svg><div class="r" style="left:0px;top:1018px;width:1920px;height:1px;background:#ffffff;"></div><div class="r" style="left:0px;top:1019px;width:1920px;height:20px;background:#f4f4f4;"></div><div class="t" style="top:1025.00px;font-size:10.8px;color:#333;font-weight:normal;font-style:normal;left:7px;">Ready</div><svg class="r" style="left:57px;top:1021px;" width="16" height="16" viewBox="0 0 16 16"><circle cx="6.5" cy="2.6" r="1.8" fill="none" stroke="#333" stroke-width="1"/><path d="M1 4.5 Q3 6.5 6.5 6 Q10 6.5 11.5 4.5 M6.5 6 V9.5 Q5 12 2.5 14.5 M6.5 9.5 Q7.5 11 8.5 12" fill="none" stroke="#333" stroke-width="1"/><path d="M9 10.5 L14 15.5 M14 10.5 L9 15.5" stroke="#333" stroke-width="1"/></svg><div class="t" style="top:1025.00px;font-size:11.3px;color:#333;font-weight:normal;font-style:normal;left:75px;">Accessibility: Investigate</div><svg class="r" style="left:1501px;top:1022px;" width="16" height="14" viewBox="0 0 16 14"><rect x="0.5" y="0.5" width="14" height="10" fill="none" stroke="#444"/><path d="M5 13.5 H9" stroke="#444"/><circle cx="11.5" cy="10" r="3" fill="#fff" stroke="#444"/></svg><div class="t" style="top:1025.00px;font-size:11.5px;color:#333;font-weight:normal;font-style:normal;left:1519px;">Display Settings</div><div class="r" style="left:1619px;top:1019px;width:40px;height:20px;background:#dcdcdc;"></div><svg class="r" style="left:1632px;top:1022px;" width="14" height="14" viewBox="0 0 14 14"><path d="M0.5 0.5 H13.5 V13.5 H0.5Z M0.5 5 H13.5 M0.5 9.5 H13.5 M5 0.5 V13.5 M9.5 0.5 V13.5" fill="none" stroke="#444"/></svg><svg class="r" style="left:1673px;top:1022px;" width="14" height="14" viewBox="0 0 14 14"><rect x="0.5" y="0.5" width="13" height="13" fill="none" stroke="#444"/><rect x="3.5" y="3" width="7" height="8" fill="none" stroke="#444" stroke-width="0.9"/><path d="M5 5.5 H9 M5 7.5 H9" stroke="#444" stroke-width="0.8"/></svg><svg class="r" style="left:1713px;top:1022px;" width="14" height="14" viewBox="0 0 14 14"><rect x="0.5" y="0.5" width="13" height="13" fill="none" stroke="#444"/><path d="M4.5 0.5 V7.5 H9.5 V0.5" fill="none" stroke="#444"/></svg><div class="r" style="left:1745px;top:1029px;width:9px;height:1px;background:#444;"></div><div class="r" style="left:1760px;top:1029px;width:101px;height:1px;background:#9a9a9a;"></div><div class="r" style="left:1809px;top:1026px;width:1px;height:6px;background:#666;"></div><div class="r" style="left:1817px;top:1023px;width:5px;height:12px;background:#444;"></div><svg class="r" style="left:1862px;top:1024px;" width="10" height="10" viewBox="0 0 10 10"><path d="M5 0 V10 M0 5 H10" stroke="#444"/></svg><div class="t" style="top:1025.00px;font-size:11px;color:#333;font-weight:normal;font-style:normal;left:711px;width:1200px;text-align:right;">166%</div><svg class="r" style="left:0;top:0" width="1100" height="130" viewBox="0 0 1100 130"><path d="M40.2 89 L49.8 98.4 Q46 103 41 102.5 Q36 101.5 35.5 96.5 Q35.6 92 40.2 89Z" fill="#cbcacd" stroke="#a3a3a3" stroke-width="0.9"/><path d="M42.8 91.5 L46.5 87.5 M47.5 96 L51.3 92" stroke="#a3a3a3" stroke-width="2.6" stroke-linecap="round"/><path d="M42.8 91.5 L46.5 87.5 M47.5 96 L51.3 92" stroke="#f3eff4" stroke-width="1" stroke-linecap="round"/><path d="M37.5 101 L34 104.8" stroke="#a3a3a3" stroke-width="2.4"/><path d="M37.5 101 L34 104.8" stroke="#f3eff4" stroke-width="0.9"/><path d="M33.8 105 Q30.5 108 32.5 110 Q34.5 111.5 36.5 109 Q39 107.5 40.5 110 Q40.5 112.5 37.2 114.5" fill="none" stroke="#a3a3a3" stroke-width="0.9"/><path d="M75 109.5 Q71 109 71 104 Q71.5 99 77 98.5 Q78 91 85 89.5 Q90.5 89.5 92.5 92.5 Q96.5 91.5 97.5 96.5 Q101.5 98.5 101 103.5 Q100.5 109 96 109.5Z" fill="#f3eff4" stroke="#a3a3a3" stroke-width="0.9"/><path d="M83.2 114.5 V105.8 H81 L85.6 99.2 L90.5 105.8 H88.4 V114.5Z" fill="#cbcacd" stroke="#a3a3a3" stroke-width="0.8"/><rect x="133.5" y="87.5" width="17" height="23" fill="#f3eff4" stroke="#a3a3a3" stroke-width="0.9"/><rect x="136.5" y="94" width="8" height="2.4" fill="#f3eff4" stroke="#a3a3a3" stroke-width="0.7"/><rect x="136.5" y="98.2" width="8" height="2.4" fill="#f3eff4" stroke="#a3a3a3" stroke-width="0.7"/><rect x="136.5" y="102.4" width="8" height="2.4" fill="#f3eff4" stroke="#a3a3a3" stroke-width="0.7"/><path d="M147.5 91.8 H159.6 V113.6 H143.7 V95.6Z" fill="#f3eff4" stroke="#a3a3a3" stroke-width="0.9"/><path d="M147.5 91.8 V95.6 H143.7" fill="none" stroke="#a3a3a3" stroke-width="0.8"/><rect x="152.4" y="98.2" width="10.5" height="2.4" fill="#cbcacd" stroke="#a3a3a3" stroke-width="0.7"/><rect x="152.4" y="102.4" width="10.5" height="2.4" fill="#cbcacd" stroke="#a3a3a3" stroke-width="0.7"/><rect x="152.4" y="106.8" width="10.5" height="2.6" fill="#fff" stroke="#a3a3a3" stroke-width="0.7"/><rect x="187.4" y="88.4" width="21.2" height="13" fill="none" stroke="#a3a3a3" stroke-width="0.8" stroke-dasharray="1.2 1.2"/><rect x="190.2" y="91.7" width="14.6" height="6.7" fill="#cbcacd" stroke="#a3a3a3" stroke-width="0.8"/><path d="M180.6 94.5 H187.5 V101.5 H198.6 V114.3 H180.6Z" fill="#f3eff4" stroke="#a3a3a3" stroke-width="0.9"/><path d="M187.5 101.5 V114.3 M180.6 101.5 H187.5 M180.6 107.5 H198.6" stroke="#a3a3a3" stroke-width="0.8"/><rect x="187.8" y="101.9" width="10.4" height="12" fill="#e6e3e8"/><path d="M187.5 107.5 H198.6" stroke="#a3a3a3" stroke-width="0.8"/><path d="M230.2 91.1 H233.7 V104 H237.7 L232 111 L226.7 104 H230.2Z" fill="#cbcacd" stroke="#a3a3a3" stroke-width="0.8"/><rect x="239.4" y="91.2" width="16.4" height="4.4" fill="#f3eff4" stroke="#a3a3a3" stroke-width="0.9"/><rect x="239.4" y="98.4" width="12.1" height="4.6" fill="#f3eff4" stroke="#a3a3a3" stroke-width="0.9"/><rect x="239.4" y="106.1" width="7.2" height="4.4" fill="#f3eff4" stroke="#a3a3a3" stroke-width="0.9"/><path d="M281.5 88 V96 M290.7 88 V93 M300.3 88 V92 M281.5 108.3 V112 M290.7 109.5 V112 M300.3 108.3 V112" stroke="#a3a3a3" stroke-width="0.8"/><rect x="278" y="112" width="25.8" height="2.4" fill="#f3eff4" stroke="#a3a3a3" stroke-width="0.8"/><path d="M279.9 102.9 L289.5 95.6 L293.7 100.8 L301.2 94" fill="none" stroke="#a3a3a3" stroke-width="3.2"/><path d="M279.9 102.9 L289.5 95.6 L293.7 100.8 L301.2 94" fill="none" stroke="#cbcacd" stroke-width="1.6"/><path d="M284.8 106.1 L289.5 102.6 L293.5 106.8 L299.4 101.7" fill="none" stroke="#a3a3a3" stroke-width="2.4"/><path d="M284.8 106.1 L289.5 102.6 L293.5 106.8 L299.4 101.7" fill="none" stroke="#f3eff4" stroke-width="1"/><rect x="335.2" y="89.9" width="26.5" height="17.6" fill="#f3eff4" stroke="#a3a3a3" stroke-width="0.9"/><circle cx="341.6" cy="99.2" r="4" fill="#e9e6ea" stroke="#a3a3a3" stroke-width="0.8"/><path d="M341.6 95.2 V99.2 H345.6" fill="none" stroke="#a3a3a3" stroke-width="0.8"/><rect x="348" y="94.2" width="9.8" height="2.2" fill="#cbcacd" stroke="#a3a3a3" stroke-width="0.5"/><rect x="348" y="98" width="4.8" height="1.8" fill="#cbcacd" stroke="#a3a3a3" stroke-width="0.5"/><rect x="348" y="101.4" width="7.6" height="2.2" fill="#cbcacd" stroke="#a3a3a3" stroke-width="0.5"/><path d="M348.4 107.6 V110.6" stroke="#a3a3a3" stroke-width="0.8"/><path d="M348.4 110.6 L350.4 112.6 L348.4 114.6 L346.4 112.6Z" fill="#fff" stroke="#a3a3a3" stroke-width="0.8"/><path d="M414.4 111.4 A10 10 0 0 1 410 92.6" fill="none" stroke="#5b6f8a" stroke-width="5"/><path d="M414.4 111.4 A10 10 0 0 1 410 92.6" fill="none" stroke="#8fbdf2" stroke-width="3.6"/><path d="M406 88.6 H414.7 V96.7 Z" fill="#8fbdf2" stroke="#5b6f8a" stroke-width="0.7"/><path d="M419.4 91.4 A10 10 0 0 1 424 109.5" fill="none" stroke="#5b6f8a" stroke-width="5"/><path d="M419.4 91.4 A10 10 0 0 1 424 109.5" fill="none" stroke="#d3f0fb" stroke-width="3.6"/><path d="M419.4 105.7 V114.2 H427.6 Z" fill="#d3f0fb" stroke="#5b6f8a" stroke-width="0.7"/><path d="M469.5 89.5 Q463.5 88.5 462.5 95 L461.5 99.5 H458.8 V102 H461 L459.3 109.2 Q458.5 111.5 456.8 110.5 V112.8 Q462 114 463.4 108 L465 102 H468.3 V99.5 H465.6 L466.4 96 Q467 92.5 469.8 92.5Z" fill="#8fbdf2" stroke="#5b6f8a" stroke-width="0.6"/><path d="M469.8 103 H473.3 L475 106 L476.7 103 H480.2 L476.8 107.8 L480.4 112.6 H476.8 L475 109.6 L473.2 112.6 H469.6 L473.2 107.8Z" fill="#d3f0fb" stroke="#5b6f8a" stroke-width="0.6"/><rect x="507.4" y="90" width="27.4" height="21.5" fill="#fff" stroke="#bcbcbc" stroke-width="0.9"/><rect x="507.6" y="90.2" width="8.8" height="7" fill="#d3f0fb"/><rect x="507.6" y="97.2" width="8.8" height="7.1" fill="#8fbdf2"/><rect x="507.6" y="104.3" width="8.8" height="7" fill="#fdd84a"/><path d="M516.4 90 V111.5 M525.4 90 V111.5 M507.4 97.2 H534.8 M507.4 104.3 H534.8" stroke="#505050" stroke-width="0.9"/><rect x="553.2" y="86.8" width="22.8" height="4.6" fill="#8fbdf2" stroke="#6a7a90" stroke-width="0.8"/><path d="M553.2 91.4 H576 L567 101.2 H562.2Z" fill="#d3f0fb" stroke="#6a7a90" stroke-width="0.8"/><path d="M562.2 101.2 H567 V109 L562.2 112 Z" fill="#fff" stroke="#6a7a90" stroke-width="0.8"/><path d="M562.2 112 L567 109 V111.5 L562.4 114.6Z" fill="#fdd84a" stroke="#6a7a90" stroke-width="0.7"/><rect x="608.2" y="89.2" width="13.8" height="4.4" fill="#f3eff4" stroke="#a3a3a3" stroke-width="0.8"/><rect x="608.2" y="108.2" width="13.8" height="4.4" fill="#cbcacd" stroke="#a3a3a3" stroke-width="0.8"/><path d="M615.1 93.6 L618.6 97.5 H617 V104 H618.6 L615.1 108 L611.6 104 H613.2 V97.5 H611.6Z" fill="#f3eff4" stroke="#a3a3a3" stroke-width="0.8"/><path d="M668 104 Q669 95 672 92 L675 91.5 Q675.5 89.4 677 89.4 Q678.5 89.4 679 91.5 H684 Q684.5 89.4 686 89.4 Q687.5 89.4 688 91.5 L691 92 Q694 95 695 104Z" fill="#efecf0" stroke="#a3a3a3" stroke-width="0.8"/><circle cx="672.6" cy="105.6" r="6.3" fill="#efecf0" stroke="#a3a3a3" stroke-width="0.8"/><circle cx="672.6" cy="105.6" r="4.3" fill="#cbcacd" stroke="#a3a3a3" stroke-width="0.8"/><circle cx="689.8" cy="105.6" r="6.3" fill="#efecf0" stroke="#a3a3a3" stroke-width="0.8"/><circle cx="689.8" cy="105.6" r="4.3" fill="#cbcacd" stroke="#a3a3a3" stroke-width="0.8"/><circle cx="681.2" cy="105.6" r="1.8" fill="#fff" stroke="#a3a3a3" stroke-width="0.7"/><path d="M737.3 101.5 L737.3 89.4 M737.3 101.5 L725.3 96.9 M737.3 101.5 L748.2 96.7 M737.3 101.5 L727.4 110.6 M737.3 101.5 L746 110" stroke="#a3a3a3" stroke-width="0.8"/><circle cx="737.3" cy="101.5" r="6" fill="#efecf0" stroke="#a3a3a3" stroke-width="0.8"/><circle cx="737.3" cy="101.5" r="4.4" fill="#cbcacd" stroke="#a3a3a3" stroke-width="0.7"/><circle cx="737.3" cy="89.6" r="2.3" fill="#f3eff4" stroke="#a3a3a3" stroke-width="0.8"/><circle cx="725.3" cy="96.9" r="2.7" fill="#f3eff4" stroke="#a3a3a3" stroke-width="0.8"/><circle cx="748.2" cy="96.7" r="3" fill="#f3eff4" stroke="#a3a3a3" stroke-width="0.8"/><circle cx="727.4" cy="110.6" r="2.5" fill="#f3eff4" stroke="#a3a3a3" stroke-width="0.8"/><circle cx="746" cy="110" r="2.5" fill="#f3eff4" stroke="#a3a3a3" stroke-width="0.8"/><path d="M779.3 90 H788.3 V105.5 H806.7 V113.5 H779.3Z" fill="#f3eff4" stroke="#a3a3a3" stroke-width="0.9"/><path d="M779.3 97.5 H788.3 M779.3 105.5 H788.3 V113.5 M797.5 105.5 V113.5" fill="none" stroke="#a3a3a3" stroke-width="0.8"/><circle cx="797.5" cy="96.9" r="5.5" fill="#cbcacd" stroke="#a3a3a3" stroke-width="0.8"/><path d="M797.5 91.4 V96.9 H803" fill="#f3eff4" stroke="#a3a3a3" stroke-width="0.7"/><rect x="800" y="88.4" width="6.8" height="2.1" fill="#fff" stroke="#a3a3a3" stroke-width="0.7"/><rect x="800" y="92.3" width="3.5" height="1.8" fill="#fff" stroke="#a3a3a3" stroke-width="0.6"/><rect x="836.6" y="90" width="28" height="23.5" fill="#fff" stroke="#a3a3a3" stroke-width="0.9"/><rect x="836.6" y="90" width="28" height="4.6" fill="#cbcacd" stroke="#a3a3a3" stroke-width="0.8"/><rect x="841.4" y="88.2" width="1.8" height="4" fill="#fff" stroke="#a3a3a3" stroke-width="0.6"/><rect x="858.5" y="88.2" width="1.8" height="4" fill="#fff" stroke="#a3a3a3" stroke-width="0.6"/><path d="M841 110.5 Q842.5 102 852.5 101.5 V98 L859.4 103.4 L852.5 108.7 V105.3 Q845 105 841 110.5Z" fill="#cbcacd" stroke="#a3a3a3" stroke-width="0.8"/><path d="M913.5 90.5 A12.5 12.5 0 1 0 926.5 90.5" fill="none" stroke="#6e7f92" stroke-width="4.2" stroke-linecap="butt"/><path d="M913.5 90.5 A12.5 12.5 0 1 0 926.5 90.5" fill="none" stroke="#d3f0fb" stroke-width="2.8" stroke-linecap="butt"/><rect x="918.2" y="87" width="3.6" height="15" rx="1.8" fill="#8fbdf2" stroke="#6e7f92" stroke-width="0.7"/><path d="M956.5 96 A12 12 0 0 1 979 98" fill="none" stroke="#8a7a40" stroke-width="3"/><path d="M956.5 96 A12 12 0 0 1 979 98" fill="none" stroke="#f7cd45" stroke-width="1.8"/><path d="M975.5 98 H982.5 L979 102.6Z" fill="#f7cd45" stroke="#8a7a40" stroke-width="0.6"/><path d="M978 107.5 A12 12 0 0 1 955 104" fill="none" stroke="#6e7f92" stroke-width="3"/><path d="M978 107.5 A12 12 0 0 1 955 104" fill="none" stroke="#d3f0fb" stroke-width="1.8"/><path d="M951.8 104.2 H958.8 L955.3 99.8Z" fill="#d3f0fb" stroke="#6e7f92" stroke-width="0.6"/><circle cx="967" cy="101" r="5" fill="none" stroke="#8fbdf2" stroke-width="3.2" stroke-dasharray="2.2 1.7"/><circle cx="967" cy="101" r="4.2" fill="none" stroke="#8fbdf2" stroke-width="2.2"/><circle cx="967" cy="101" r="2.2" fill="#fff" stroke="#6e7f92" stroke-width="0.5"/><path d="M1004.5 95.5 Q1004 87.5 1012.5 87.5 Q1021.5 88 1021 95.5 Q1020.5 99.5 1016 101.5 Q1014.8 102.5 1014.8 105 H1010.5 Q1010.3 100.5 1013.5 98.5 Q1016.8 96.8 1016.5 95 Q1016 91.8 1012.8 92 Q1009.3 92 1009 95.5Z" fill="#8fbdf2" stroke="#6e7f92" stroke-width="0.6"/><rect x="1010.5" y="107.8" width="4.3" height="3.8" fill="#8fbdf2" stroke="#6e7f92" stroke-width="0.6"/></svg>
</body></html>
